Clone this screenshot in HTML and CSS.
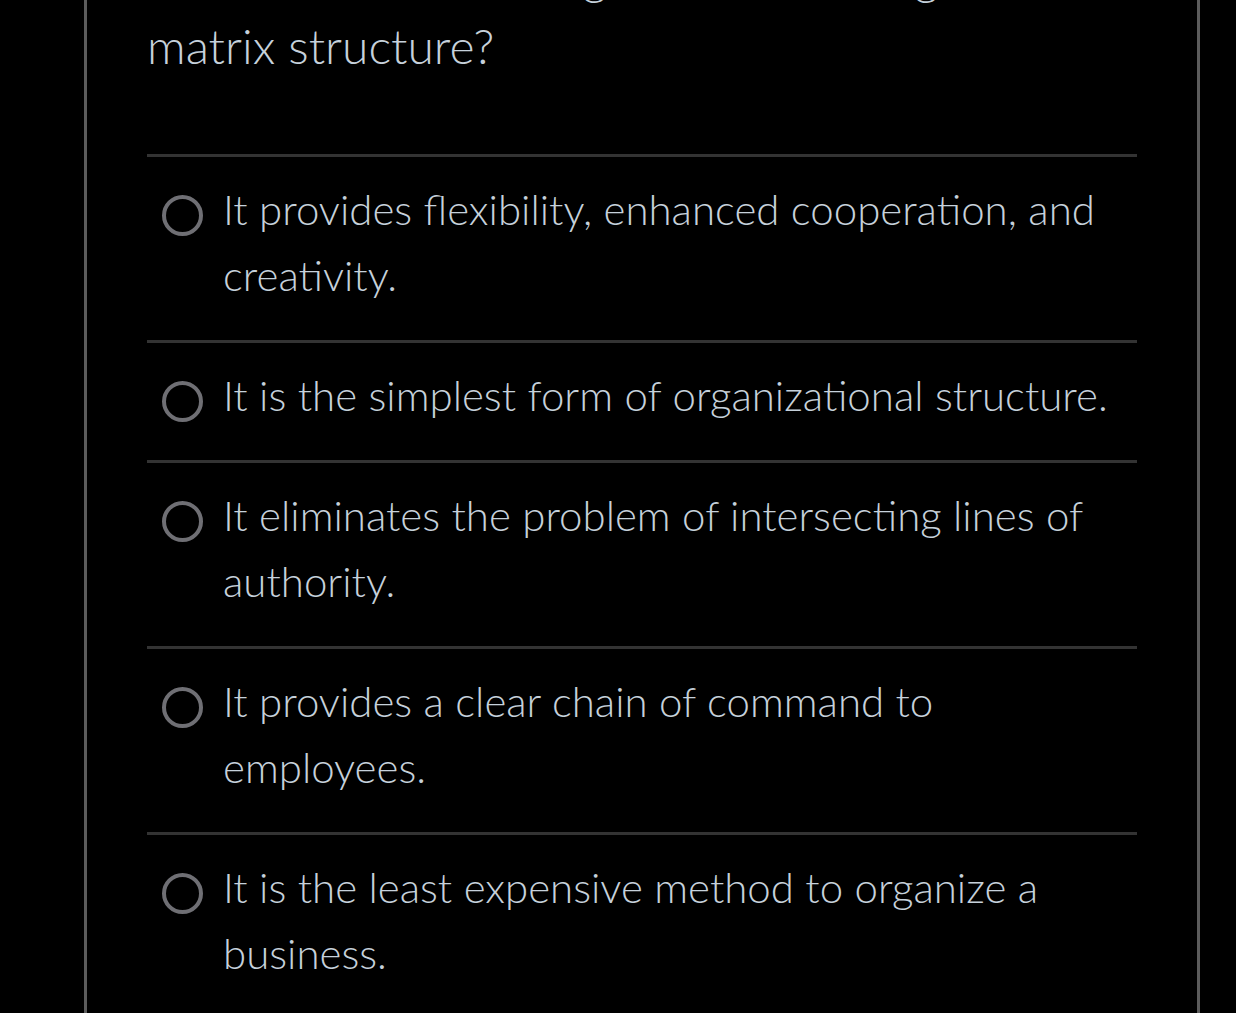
FILE: index.html
```html
<!DOCTYPE html>
<html lang="en">
<head>
<meta charset="utf-8">
<title>Question</title>
<link rel="stylesheet" href="styles.css">
</head>
<body>
<main class="panel">
  <p class="question">Which is the advantage of a firm using a<br>matrix structure?</p>
  <ul class="options">
    <li class="option"><span class="radio"></span><span class="label">It provides flexibility, enhanced cooperation, and creativity.</span></li>
    <li class="option"><span class="radio"></span><span class="label">It is the simplest form of organizational structure.</span></li>
    <li class="option"><span class="radio"></span><span class="label">It eliminates the problem of intersecting lines of authority.</span></li>
    <li class="option"><span class="radio"></span><span class="label">It provides a clear chain of command to employees.</span></li>
    <li class="option"><span class="radio"></span><span class="label">It is the least expensive method to organize a business.</span></li>
  </ul>
</main>
</body>
</html>
```
FILE: styles.css
```css
html, body {
  margin: 0;
  padding: 0;
  background: #000;
  height: 100%;
  overflow: hidden;
}
body {
  font-family: "Lato", "Liberation Sans", sans-serif;
  font-weight: 300;
  color: #c6d1db;
}
.panel {
  display: flow-root;
  margin-left: 84px;
  width: 1050px;
  height: 1013px;
  border-left: 3px solid #5c5c5c;
  border-right: 3px solid #5c5c5c;
  padding-left: 60px;
  box-sizing: content-box;
}
.question {
  margin: -58px 0 0 0;
  width: 990px;
  font-size: 48px;
  line-height: 69px;
  padding-bottom: 74px;
  white-space: nowrap;
}
.options {
  list-style: none;
  margin: 0;
  padding: 0;
  width: 990px;
}
.option {
  display: flex;
  align-items: flex-start;
  border-top: 3px solid #333;
  padding: 19px 0 32px 15px;
}
.radio {
  flex: none;
  width: 33px;
  height: 33px;
  border: 4px solid #6f6f74;
  border-radius: 50%;
  margin-top: 19px;
  margin-right: 20px;
}
.label {
  font-size: 42px;
  line-height: 66px;
  max-width: 905px;
}
```
